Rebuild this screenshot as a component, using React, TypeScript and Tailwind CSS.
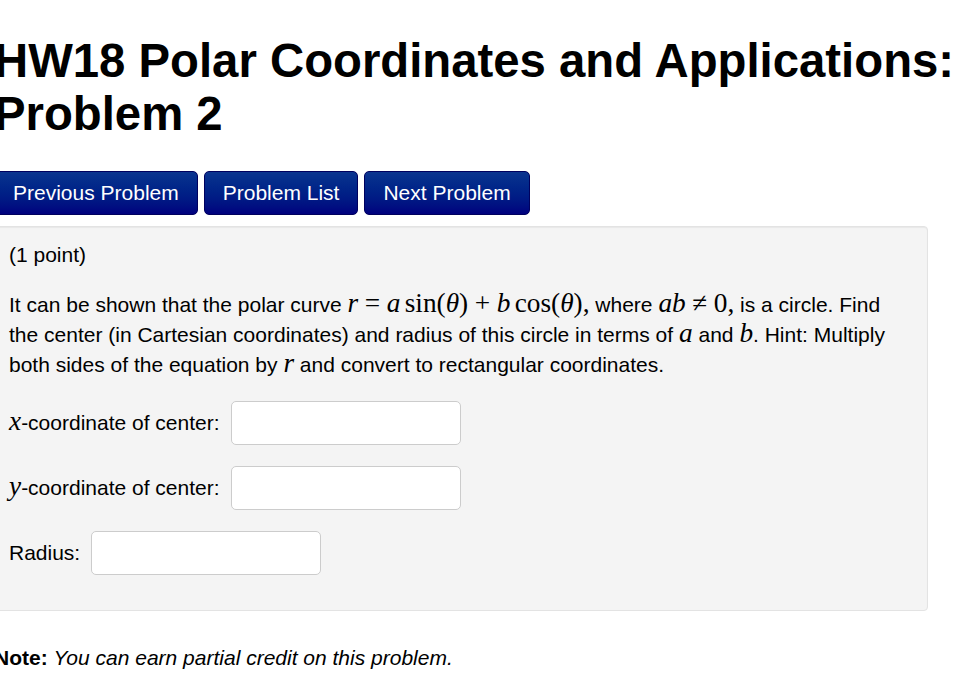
import type { ReactNode } from 'react'

const serif = { fontFamily: '"Liberation Serif", "DejaVu Serif", serif' }

function M({ children }: { children: ReactNode }) {
  return (
    <span className="text-[1.3em] leading-[0] whitespace-nowrap" style={serif}>
      {children}
    </span>
  )
}

function V({ children }: { children: ReactNode }) {
  return <i className="italic">{children}</i>
}

function Op({ children }: { children: ReactNode }) {
  return <span className="mx-[0.24em]">{children}</span>
}

function Fn({ name }: { name: string }) {
  return <span className="ml-[0.16em]">{name}</span>
}

function NavButton({ label }: { label: string }) {
  return (
    <button className="h-[44px] rounded-[5px] border border-[#00005e] bg-gradient-to-b from-[#0b348f] to-[#00007e] px-[18px] text-[21px] text-white">
      {label}
    </button>
  )
}

function AnswerRow({ label, width }: { label: ReactNode; width: string }) {
  return (
    <div className="flex items-center gap-[11px]">
      <span>{label}</span>
      <input className={`h-[44px] ${width} rounded-[5px] border border-[#cccccc] bg-white`} />
    </div>
  )
}

export default function App() {
  return (
    <div
      className="ml-[-6px] w-[934px] pt-[34px] text-black"
      style={{ fontFamily: '"Liberation Sans", Arial, sans-serif' }}
    >
      <h1 className="w-[975px] text-[47.3px] font-bold leading-[53px]">
        HW18 Polar Coordinates and Applications: Problem 2
      </h1>

      <div className="mt-[31px] flex gap-[6px]">
        <NavButton label="Previous Problem" />
        <NavButton label="Problem List" />
        <NavButton label="Next Problem" />
      </div>

      <div className="mt-[11px] h-[385px] rounded-[4px] border border-[#e3e3e3] bg-[#f4f4f4] px-[14px] pt-[13px] text-[21px] leading-[30px] shadow-[inset_0_1px_1px_rgba(0,0,0,0.05)]">
        <p>(1 point)</p>
        <p className="mt-[20px] pr-[6px]">
          It can be shown that the polar curve{' '}
          <M>
            <V>r</V>
            <Op>=</Op>
            <V>a</V>
            <Fn name="sin" />(<V>θ</V>)<Op>+</Op>
            <V>b</V>
            <Fn name="cos" />(<V>θ</V>),
          </M>{' '}
          where{' '}
          <M>
            <V>ab</V>
            <Op>≠</Op>0,
          </M>{' '}
          is a circle. Find the center (in Cartesian coordinates) and radius of this circle in terms of{' '}
          <M>
            <V>a</V>
          </M>{' '}
          and{' '}
          <M>
            <V>b</V>
          </M>
          . Hint: Multiply both sides of the equation by{' '}
          <M>
            <V>r</V>
          </M>{' '}
          and convert to rectangular coordinates.
        </p>

        <div className="mt-[21px] flex flex-col gap-[21px]">
          <AnswerRow
            label={
              <>
                <M>
                  <V>x</V>
                </M>
                -coordinate of center:
              </>
            }
            width="w-[230px]"
          />
          <AnswerRow
            label={
              <>
                <M>
                  <V>y</V>
                </M>
                -coordinate of center:
              </>
            }
            width="w-[230px]"
          />
          <AnswerRow label="Radius:" width="w-[230px]" />
        </div>
      </div>

      <p className="mt-[31px] text-[21px]">
        <b>Note:</b> <i>You can earn partial credit on this problem.</i>
      </p>
    </div>
  )
}
